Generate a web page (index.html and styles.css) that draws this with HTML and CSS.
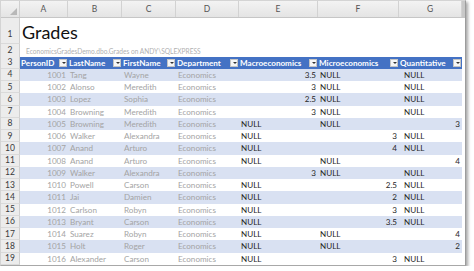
FILE: index.html
```html
<!DOCTYPE html>
<html>
<head>
<meta charset="utf-8">
<link rel="stylesheet" href="styles.css">
</head>
<body>
<div class="sheet">
  <div class="row colhdr">
    <div class="corner"><span class="tri"></span></div>
    <div class="ch">A</div><div class="ch">B</div><div class="ch">C</div><div class="ch">D</div><div class="ch">E</div><div class="ch">F</div><div class="ch">G</div><div class="ch sb"></div>
  </div>
  <div class="row r1">
    <div class="rh">1</div>
    <div class="title">Grades</div>
  </div>
  <div class="row r2">
    <div class="rh">2</div>
    <div class="sub">EconomicsGradesDemo.dbo.Grades on ANDY\SQLEXPRESS</div>
  </div>
  <div class="row dr thead">
    <div class="rh">3</div>
    <div class="th">PersonID<span class="flt"></span></div>
    <div class="th">LastName<span class="flt"></span></div>
    <div class="th">FirstName<span class="flt"></span></div>
    <div class="th">Department<span class="flt"></span></div>
    <div class="th">Macroeconomics<span class="flt"></span></div>
    <div class="th">Microeconomics<span class="flt"></span></div>
    <div class="th">Quantitative<span class="flt"></span></div>
    <div class="sbc"></div>
  </div>
  <div class="row dr band"><div class="rh">4</div><div class="c n">1001</div><div class="c">Tang</div><div class="c">Wayne</div><div class="c">Economics</div><div class="c n v">3.5</div><div class="c v">NULL</div><div class="c v g">NULL</div><div class="sbc"></div></div>
  <div class="row dr"><div class="rh">5</div><div class="c n">1002</div><div class="c">Alonso</div><div class="c">Meredith</div><div class="c">Economics</div><div class="c n v">3</div><div class="c v">NULL</div><div class="c v g">NULL</div><div class="sbc"></div></div>
  <div class="row dr band"><div class="rh">6</div><div class="c n">1003</div><div class="c">Lopez</div><div class="c">Sophia</div><div class="c">Economics</div><div class="c n v">2.5</div><div class="c v">NULL</div><div class="c v g">NULL</div><div class="sbc"></div></div>
  <div class="row dr"><div class="rh">7</div><div class="c n">1004</div><div class="c">Browning</div><div class="c">Meredith</div><div class="c">Economics</div><div class="c n v">3</div><div class="c v">NULL</div><div class="c v g">NULL</div><div class="sbc"></div></div>
  <div class="row dr band"><div class="rh">8</div><div class="c n">1005</div><div class="c">Browning</div><div class="c">Meredith</div><div class="c">Economics</div><div class="c v">NULL</div><div class="c v">NULL</div><div class="c n v">3</div><div class="sbc"></div></div>
  <div class="row dr"><div class="rh">9</div><div class="c n">1006</div><div class="c">Walker</div><div class="c">Alexandra</div><div class="c">Economics</div><div class="c v">NULL</div><div class="c n v">3</div><div class="c v g">NULL</div><div class="sbc"></div></div>
  <div class="row dr band"><div class="rh">10</div><div class="c n">1007</div><div class="c">Anand</div><div class="c">Arturo</div><div class="c">Economics</div><div class="c v">NULL</div><div class="c n v">4</div><div class="c v g">NULL</div><div class="sbc"></div></div>
  <div class="row dr"><div class="rh">11</div><div class="c n">1008</div><div class="c">Anand</div><div class="c">Arturo</div><div class="c">Economics</div><div class="c v">NULL</div><div class="c v">NULL</div><div class="c n v">4</div><div class="sbc"></div></div>
  <div class="row dr band"><div class="rh">12</div><div class="c n">1009</div><div class="c">Walker</div><div class="c">Alexandra</div><div class="c">Economics</div><div class="c n v">3</div><div class="c v">NULL</div><div class="c v g">NULL</div><div class="sbc"></div></div>
  <div class="row dr"><div class="rh">13</div><div class="c n">1010</div><div class="c">Powell</div><div class="c">Carson</div><div class="c">Economics</div><div class="c v">NULL</div><div class="c n v">2.5</div><div class="c v g">NULL</div><div class="sbc"></div></div>
  <div class="row dr band"><div class="rh">14</div><div class="c n">1011</div><div class="c">Jai</div><div class="c">Damien</div><div class="c">Economics</div><div class="c v">NULL</div><div class="c n v">2</div><div class="c v g">NULL</div><div class="sbc"></div></div>
  <div class="row dr"><div class="rh">15</div><div class="c n">1012</div><div class="c">Carlson</div><div class="c">Robyn</div><div class="c">Economics</div><div class="c v">NULL</div><div class="c n v">3</div><div class="c v g">NULL</div><div class="sbc"></div></div>
  <div class="row dr band"><div class="rh">16</div><div class="c n">1013</div><div class="c">Bryant</div><div class="c">Carson</div><div class="c">Economics</div><div class="c v">NULL</div><div class="c n v">3.5</div><div class="c v g">NULL</div><div class="sbc"></div></div>
  <div class="row dr"><div class="rh">17</div><div class="c n">1014</div><div class="c">Suarez</div><div class="c">Robyn</div><div class="c">Economics</div><div class="c v">NULL</div><div class="c v">NULL</div><div class="c n v">4</div><div class="sbc"></div></div>
  <div class="row dr band"><div class="rh">18</div><div class="c n">1015</div><div class="c">Holt</div><div class="c">Roger</div><div class="c">Economics</div><div class="c v">NULL</div><div class="c v">NULL</div><div class="c n v">2</div><div class="sbc"></div></div>
  <div class="row dr"><div class="rh">19</div><div class="c n">1016</div><div class="c">Alexander</div><div class="c">Carson</div><div class="c">Economics</div><div class="c v">NULL</div><div class="c n v">3</div><div class="c v g">NULL</div><div class="sbc"></div></div>
</div>
</body>
</html>
```

FILE: styles.css
```css
html, body {
  margin: 0;
  padding: 0;
  background: #ffffff;
}

body {
  font-family: Lato, "Liberation Sans", sans-serif;
}

.sheet {
  width: 466px;
  border-top: 1px solid #d4d4d4;
  border-left: 1px solid #d4d4d4;
  border-right: 1px solid #9c9c9c;
  border-bottom: 1px solid #a8a8a8;
  box-shadow: 2px 2px 3px rgba(0, 0, 0, 0.35);
  background: #fff;
  box-sizing: border-box;
  display: flex;
  flex-direction: column;
}

.row {
  display: grid;
  grid-template-columns: 19px 48px 54px 54px 63px 79px 81px 63px 3px;
}

.colhdr {
  height: 16px;
  background: linear-gradient(#f3f3f3, #e4e4e4);
  border-bottom: 1px solid #c6c6c6;
}

.corner {
  position: relative;
  border-right: 1px solid #d0d0d0;
}

.tri {
  position: absolute;
  right: 2px;
  bottom: 2px;
  width: 0;
  height: 0;
  border-left: 7px solid transparent;
  border-bottom: 7px solid #b8b8b8;
}

.ch {
  font-size: 8.5px;
  color: #555;
  text-align: center;
  line-height: 16px;
  border-right: 1px solid #d2d2d2;
}

.ch.sb {
  background: #c8c8c8;
  border-right: none;
}

.rh {
  background: #ececec;
  border-right: 1px solid #cfcfcf;
  border-bottom: 1px solid #dadada;
  color: #3a3a3a;
  font-size: 8.5px;
  text-align: center;
  display: flex;
  align-items: center;
  justify-content: center;
  box-sizing: border-box;
}

.r1 {
  height: 26px;
}

.r1 .rh {
  align-items: flex-end;
  padding-bottom: 4px;
}

.title {
  grid-column: 2 / 9;
  font-size: 18px;
  color: #111;
  padding-left: 2px;
  align-self: end;
  line-height: 20px;
  padding-bottom: 2px;
}

.r2 {
  height: 12.5px;
}

.sub {
  grid-column: 2 / 9;
  font-size: 6.6px;
  color: #b0b0b0;
  padding-left: 6px;
  line-height: 12.5px;
  padding-top: 1px;
}

.dr {
  height: 12.25px;
}

.th {
  position: relative;
  background: #4472c4;
  color: #fff;
  font-weight: bold;
  font-size: 8.1px;
  line-height: 12.25px;
  padding-left: 1px;
  white-space: nowrap;
  overflow: hidden;
}

.flt {
  position: absolute;
  right: 1px;
  top: 2px;
  width: 8px;
  height: 8px;
  box-sizing: border-box;
  background: #f6f6f6;
  border: 1px solid #c4c4c4;
}

.flt::after {
  content: "";
  position: absolute;
  left: 1.5px;
  top: 2.5px;
  border-left: 2.5px solid transparent;
  border-right: 2.5px solid transparent;
  border-top: 2.5px solid #333;
}

.c {
  font-size: 8.1px;
  line-height: 12.25px;
  color: #a4a4a4;
  padding: 0 2px;
  white-space: nowrap;
  overflow: hidden;
}

.c.n {
  text-align: right;
}

.c.v {
  color: #262626;
}

.c.g {
  padding-left: 5px;
}

.band .c {
  background: #d9e1f2;
}

.sbc {
  background: #fff;
}
```
